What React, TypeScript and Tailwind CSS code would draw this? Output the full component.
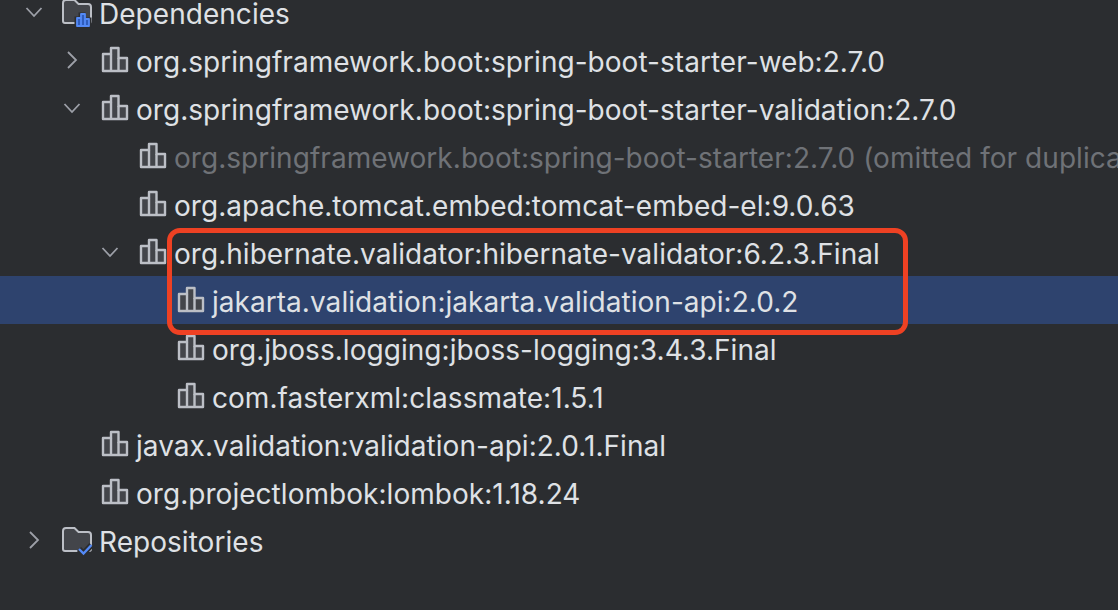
import React from 'react';

const indent = ['pl-[15px]', 'pl-[53px]', 'pl-[91px]', 'pl-[129px]'];

const Chevron: React.FC<{ open: boolean }> = ({ open }) => (
  <span className="flex w-[38px] shrink-0 items-center justify-center">
    <svg width="20" height="20" viewBox="0 0 20 20" fill="none" stroke="#9da0a8" strokeWidth="1.8">
      {open ? <path d="M2.5 6l7.5 8 7.500-8" /> : <path d="M6 2l8 8-8 8" />}
    </svg>
  </span>
);

const LibIcon = () => (
  <svg width="26" height="26" viewBox="0 0 26 26" className="mr-[8px] shrink-0 overflow-visible">
    <path d="M1 7h8V1h7.500v10H25v13H1z" fill="#43454a" stroke="#bcbfc6" strokeWidth="2.400" strokeLinejoin="round" />
    <path d="M9 7v17M16.500 11v13" stroke="#bcbfc6" strokeWidth="2.400" fill="none" />
  </svg>
);

const Folder: React.FC<{ badge: 'lib' | 'check' }> = ({ badge }) => (
  <svg width="32" height="30" viewBox="0 0 32 30" className="-ml-[2px] mr-[5px] shrink-0 overflow-visible">
    <path
      d="M1 6a3 3 0 0 1 3-3h8.500l4 4h9.500a3 3 0 0 1 3 3v14a2 2 0 0 1-2 2H3a2 2 0 0 1-2-2z"
      fill="#43454a"
      stroke="#bcbfc6"
      strokeWidth="2"
    />
    {badge === 'lib' ? (
      <g>
        <path d="M14 21h4v-4h4v5h6v7H14z" fill="#2b2d30" stroke="#2b2d30" strokeWidth="3" />
        <path d="M15 21h4v-4h4v5h4v7H15z" fill="#2f5dbd" stroke="#548af7" strokeWidth="1.800" strokeLinejoin="round" />
        <path d="M19 21v8M23 22v7" stroke="#548af7" strokeWidth="1.800" fill="none" />
      </g>
    ) : (
      <g fill="none">
        <path d="M17 24l4.500 4.500 8-8.500" stroke="#2b2d30" strokeWidth="6" />
        <path d="M17 24l4.500 4.500 8-8.500" stroke="#548af7" strokeWidth="2.400" />
      </g>
    )}
  </svg>
);

type RowProps = {
  level: number;
  label: string;
  open?: boolean;
  selected?: boolean;
  folder?: 'lib' | 'check';
  dim?: boolean;
};

const Row: React.FC<RowProps> = ({ level, label, open, selected, folder, dim }) => (
  <div className={`flex h-12 items-center whitespace-nowrap ${indent[level]} ${selected ? 'bg-[#2e436e]' : ''}`}>
    {open === undefined ? <span className="w-[38px] shrink-0" /> : <Chevron open={open} />}
    <span className="w-[11px] shrink-0" />
    {folder ? <Folder badge={folder} /> : <LibIcon />}
    <span className={`translate-y-[2px] leading-[24px] tracking-[0.04px] ${dim ? 'text-[#6f7277]' : 'text-[#dfe1e5]'}`}>{label}</span>
  </div>
);

export default function App() {
  return (
    <div className="relative h-[610px] w-[1118px] overflow-hidden bg-[#2b2d30] font-['Inter',sans-serif] text-[28px]">
      <div className="-mt-[12px]">
        <Row level={0} open folder="lib" label="Dependencies" />
        <Row level={1} open={false} label="org.springframework.boot:spring-boot-starter-web:2.7.0" />
        <Row level={1} open label="org.springframework.boot:spring-boot-starter-validation:2.7.0" />
        <Row level={2} dim label="org.springframework.boot:spring-boot-starter:2.7.0 (omitted for duplicate)" />
        <Row level={2} label="org.apache.tomcat.embed:tomcat-embed-el:9.0.63" />
        <Row level={2} open label="org.hibernate.validator:hibernate-validator:6.2.3.Final" />
        <Row level={3} selected label="jakarta.validation:jakarta.validation-api:2.0.2" />
        <Row level={3} label="org.jboss.logging:jboss-logging:3.4.3.Final" />
        <Row level={3} label="com.fasterxml:classmate:1.5.1" />
        <Row level={1} label="javax.validation:validation-api:2.0.1.Final" />
        <Row level={1} label="org.projectlombok:lombok:1.18.24" />
        <Row level={0} open={false} folder="check" label="Repositories" />
      </div>
      {/* annotation drawn over the tree */}
      <div className="absolute left-[167px] top-[228px] h-[107px] w-[741px] rounded-[13px] border-[5px] border-[#ee4123]" />
    </div>
  );
}
